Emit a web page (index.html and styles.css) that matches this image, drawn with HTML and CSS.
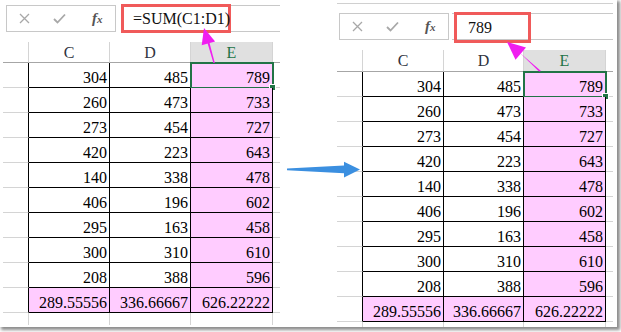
FILE: index.html
```html
<!DOCTYPE html>
<html>
<head>
<meta charset="utf-8">
<link rel="stylesheet" href="styles.css">
</head>
<body>
<div class="frame">
  <section class="panel panel-left">
    <div class="fbar">
      <div class="fbtns">
        <span class="btn"><svg width="11" height="11" viewBox="0 0 11 11"><path d="M1 1L10 10M10 1L1 10" stroke="#a8a8a8" stroke-width="1.3" fill="none"/></svg></span>
        <span class="btn"><svg width="13" height="11" viewBox="0 0 13 11"><path d="M1 6L4.5 9.5L12 1.5" stroke="#a8a8a8" stroke-width="1.8" fill="none"/></svg></span>
        <span class="btn fx"><i>f</i><span class="fxx">x</span></span>
      </div>
      <div class="finput"><div class="hl">=SUM(C1:D1)</div></div>
    </div>
    <div class="sheet">
      <div class="h rh"></div><div class="h">C</div><div class="h">D</div><div class="h hs">E</div><div class="h ht"></div>
      <div class="rh"></div><div class="c">304</div><div class="c">485</div><div class="c p"><span class="selbox"><span class="handle"></span></span>789</div><div class="t"></div>
      <div class="rh"></div><div class="c">260</div><div class="c">473</div><div class="c p">733</div><div class="t"></div>
      <div class="rh"></div><div class="c">273</div><div class="c">454</div><div class="c p">727</div><div class="t"></div>
      <div class="rh"></div><div class="c">420</div><div class="c">223</div><div class="c p">643</div><div class="t"></div>
      <div class="rh"></div><div class="c">140</div><div class="c">338</div><div class="c p">478</div><div class="t"></div>
      <div class="rh"></div><div class="c">406</div><div class="c">196</div><div class="c p">602</div><div class="t"></div>
      <div class="rh"></div><div class="c">295</div><div class="c">163</div><div class="c p">458</div><div class="t"></div>
      <div class="rh"></div><div class="c">300</div><div class="c">310</div><div class="c p">610</div><div class="t"></div>
      <div class="rh"></div><div class="c">208</div><div class="c">388</div><div class="c p">596</div><div class="t"></div>
      <div class="rh"></div><div class="c p">289.55556</div><div class="c p">336.66667</div><div class="c p">626.22222</div><div class="t"></div>
      <div class="x rh"></div><div class="x"></div><div class="x"></div><div class="x"></div><div class="x xt"></div>
    </div>
  </section>

  <section class="panel panel-right">
    <div class="fbar">
      <div class="fbtns">
        <span class="btn"><svg width="11" height="11" viewBox="0 0 11 11"><path d="M1 1L10 10M10 1L1 10" stroke="#a8a8a8" stroke-width="1.3" fill="none"/></svg></span>
        <span class="btn"><svg width="13" height="11" viewBox="0 0 13 11"><path d="M1 6L4.5 9.5L12 1.5" stroke="#a8a8a8" stroke-width="1.8" fill="none"/></svg></span>
        <span class="btn fx"><i>f</i><span class="fxx">x</span></span>
      </div>
      <div class="finput"><div class="hl">789</div></div>
    </div>
    <div class="sheet">
      <div class="h rh"></div><div class="h">C</div><div class="h">D</div><div class="h hs">E</div><div class="h ht"></div>
      <div class="rh"></div><div class="c">304</div><div class="c">485</div><div class="c p"><span class="selbox"><span class="handle"></span></span>789</div><div class="t"></div>
      <div class="rh"></div><div class="c">260</div><div class="c">473</div><div class="c p">733</div><div class="t"></div>
      <div class="rh"></div><div class="c">273</div><div class="c">454</div><div class="c p">727</div><div class="t"></div>
      <div class="rh"></div><div class="c">420</div><div class="c">223</div><div class="c p">643</div><div class="t"></div>
      <div class="rh"></div><div class="c">140</div><div class="c">338</div><div class="c p">478</div><div class="t"></div>
      <div class="rh"></div><div class="c">406</div><div class="c">196</div><div class="c p">602</div><div class="t"></div>
      <div class="rh"></div><div class="c">295</div><div class="c">163</div><div class="c p">458</div><div class="t"></div>
      <div class="rh"></div><div class="c">300</div><div class="c">310</div><div class="c p">610</div><div class="t"></div>
      <div class="rh"></div><div class="c">208</div><div class="c">388</div><div class="c p">596</div><div class="t"></div>
      <div class="rh"></div><div class="c p">289.55556</div><div class="c p">336.66667</div><div class="c p">626.22222</div><div class="t"></div>
      <div class="x rh"></div><div class="x"></div><div class="x"></div><div class="x"></div><div class="x xt"></div>
    </div>
  </section>

  <svg class="arrows" width="621" height="332" viewBox="0 0 621 332">
    <polygon points="207.5,43 209.5,42.8 214.8,63 213.4,63" fill="#f01ef0"/>
    <polygon points="204,28 215.1,41.5 201.7,45.3" fill="#f01ef0"/>
    <polygon points="520,53 521.8,54.5 541,71 539,71.5" fill="#f01ef0"/>
    <polygon points="507,42 526,47.5 515.5,59.7" fill="#f01ef0"/>
    <polygon points="287,168.4 344,165.6 344,161.7 360,169.6 344,177.5 344,173.2 287,170.2" fill="#3b8fe0"/>
  </svg>
</div>
</body>
</html>
```

FILE: styles.css
```css
html, body {
  margin: 0;
  padding: 0;
  background: #fff;
}
body {
  width: 621px;
  height: 332px;
  overflow: hidden;
  font-family: "Liberation Serif", "Times New Roman", serif;
}
.frame {
  position: relative;
  width: 617px;
  height: 327px;
  background: #fff;
  box-shadow: 2px 2px 3px 1px rgba(0, 0, 0, 0.45);
  display: flex;
  align-items: flex-start;
  overflow: hidden;
}
.panel {
  display: flex;
  flex-direction: column;
}
.panel-left {
  margin-left: 3px;
  width: 277px;
  padding-top: 5px;
}
.panel-right {
  margin-left: 57px;
  width: 276px;
  padding-top: 3px;
}
.panel-right::before {
  content: "";
  display: block;
  height: 1px;
  background: #d0d0d0;
  margin-bottom: 9px;
}
.fbar {
  display: flex;
  height: 27px;
}
.fbtns {
  box-sizing: border-box;
  width: 110px;
  height: 27px;
  margin-left: 3px;
  border: 1px solid #c8c8c8;
  display: flex;
  align-items: center;
}
.panel-right .fbtns {
  margin-left: 2px;
}
.btn {
  width: 36px;
  display: flex;
  justify-content: center;
  align-items: center;
}
.btn svg {
  display: block;
}
.fx {
  color: #555;
  font-size: 15px;
  font-weight: bold;
  line-height: 1;
  padding-left: 2px;
}
.fx i {
  font-style: italic;
}
.fxx {
  font-style: italic;
  font-size: 11px;
  position: relative;
  top: 1px;
}
.finput {
  flex: 1;
  box-sizing: border-box;
  height: 27px;
  margin-left: 5px;
  border-top: 1px solid #c8c8c8;
  border-bottom: 1px solid #c8c8c8;
  display: flex;
  align-items: center;
}
.hl {
  box-sizing: border-box;
  flex: none;
  height: 29px;
  width: 110px;
  margin-left: 0;
  border: 3px solid #f05a5a;
  display: flex;
  align-items: center;
  padding-left: 9px;
  font-size: 16px;
  line-height: 1;
  color: #111;
}
.panel-right .finput {
  margin-left: 3px;
  align-items: flex-start;
}
.panel-right .hl {
  width: 77px;
  height: 31px;
  margin-top: -2px;
  margin-left: 2px;
  padding-left: 11px;
}
.sheet {
  display: grid;
  grid-template-columns: 26px 81px 81px 82px 7px;
  grid-auto-rows: 25px;
  grid-template-rows: 21px;
  margin-top: 10px;
  font-size: 16px;
  color: #000;
}
.panel-right .sheet {
  grid-template-columns: 26px 81px 80px 82px 7px;
  grid-template-rows: 22px;
  margin-top: 10px;
}
.sheet > div {
  box-sizing: border-box;
}
.h {
  border-right: 1px solid #d4d4d4;
  border-bottom: 1px solid #a6a6a6;
  display: flex;
  align-items: center;
  justify-content: center;
  color: #2f3340;
  line-height: 1;
  padding-top: 1px;
}
.h.ht {
  border-right: none;
}
.h.hs {
  background: #e0e0e0;
  color: #217346;
}
.rh {
  border-right: 1px solid #000;
  border-bottom: 1px solid #d4d4d4;
}
.h.rh {
  border-right: 1px solid #d4d4d4;
  border-bottom: 1px solid #a6a6a6;
}
.c {
  position: relative;
  border-right: 1px solid #000;
  border-bottom: 1px solid #000;
  display: flex;
  align-items: flex-end;
  justify-content: flex-end;
  padding-right: 2px;
  line-height: 16px;
  padding-bottom: 1px;
}
.c.p {
  background: #ffccff;
}
.t {
  border-bottom: 1px solid #d4d4d4;
}
.x {
  height: 12px;
  border-right: 1px solid #d4d4d4;
}
.x.rh {
  border-bottom: none;
}
.x.xt {
  border-right: none;
}
.selbox {
  position: absolute;
  left: -1px;
  top: -1px;
  right: -2px;
  bottom: -2px;
  border: 2px solid #217346;
  box-sizing: border-box;
}
.handle {
  position: absolute;
  right: -4px;
  bottom: -4px;
  width: 5px;
  height: 5px;
  background: #217346;
  border: 1px solid #fff;
}
.arrows {
  position: absolute;
  left: 0;
  top: 0;
  pointer-events: none;
}
```
